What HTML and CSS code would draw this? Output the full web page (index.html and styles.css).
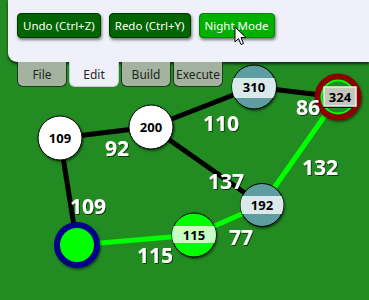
FILE: index.html
```html
<!DOCTYPE html>
<html>
<head>
<meta charset="utf-8">
<link rel="stylesheet" href="styles.css">
</head>
<body>
<svg class="graph" width="369" height="300" viewBox="0 0 369 300">
  <defs>
    <filter id="sh" x="-30%" y="-30%" width="160%" height="160%">
      <feDropShadow dx="1" dy="1.5" stdDeviation="1.2" flood-color="#000" flood-opacity="0.55"/>
    </filter>
    <filter id="tsh" x="-30%" y="-30%" width="160%" height="160%">
      <feDropShadow dx="1" dy="1" stdDeviation="0.6" flood-color="#000" flood-opacity="0.6"/>
    </filter>
    <clipPath id="c310"><circle cx="254" cy="87" r="22"/></clipPath>
    <clipPath id="c192"><circle cx="262" cy="205" r="21.5"/></clipPath>
    <clipPath id="c115"><circle cx="194" cy="235" r="22"/></clipPath>
  </defs>
  <g class="edges-black">
    <line x1="60" y1="138" x2="151" y2="127"/>
    <line x1="151" y1="127" x2="254" y2="87"/>
    <line x1="254" y1="87" x2="338" y2="97"/>
    <line x1="151" y1="127" x2="262" y2="205"/>
    <line x1="60" y1="138" x2="77" y2="245"/>
  </g>
  <g class="edges-lime">
    <line x1="77" y1="245" x2="194" y2="235"/>
    <line x1="194" y1="235" x2="262" y2="205"/>
    <line x1="262" y1="205" x2="338" y2="97"/>
  </g>
  <g filter="url(#sh)">
    <circle cx="60" cy="138" r="22" fill="#fff" stroke="#000" stroke-width="1"/>
    <circle cx="151" cy="127" r="22" fill="#fff" stroke="#000" stroke-width="1"/>
    <circle cx="254" cy="87" r="22" fill="#5f9ea0" stroke="#000" stroke-width="1"/>
    <circle cx="262" cy="205" r="21.5" fill="#5f9ea0" stroke="#000" stroke-width="1"/>
    <circle cx="194" cy="235" r="22" fill="#00ff00" stroke="#000" stroke-width="1"/>
    <circle cx="77" cy="245" r="20" fill="#00ff00" stroke="#00008b" stroke-width="6"/>
    <circle cx="338" cy="97" r="20.5" fill="#00ff00" stroke="#8b0000" stroke-width="6"/>
  </g>
  <rect x="230" y="78" width="48" height="20" fill="#dae9ea" clip-path="url(#c310)"/>
  <rect x="238" y="196" width="48" height="18" fill="#dae9ea" clip-path="url(#c192)"/>
  <rect x="170" y="226" width="48" height="17" fill="#c6ffc6" clip-path="url(#c115)"/>
  <circle cx="338" cy="97" r="15.5" fill="#228b22"/>
  <rect x="323" y="100" width="30" height="8" fill="#111"/>
  <rect x="324" y="87" width="32" height="19" fill="#c6c6be" stroke="#e6f6e0" stroke-width="1.5"/>
  <g class="ntext">
    <text x="60" y="143">109</text>
    <text x="151" y="132">200</text>
    <text x="254" y="92">310</text>
    <text x="262" y="210">192</text>
    <text x="194" y="240">115</text>
    <text x="340" y="102">324</text>
  </g>
  <g class="etext" filter="url(#tsh)">
    <text x="117" y="156">92</text>
    <text x="221" y="131">110</text>
    <text x="308" y="115">86</text>
    <text x="320" y="175">132</text>
    <text x="226" y="189">137</text>
    <text x="88" y="214">109</text>
    <text x="155" y="263">115</text>
    <text x="241" y="245">77</text>
  </g>
</svg>

<div class="panel">
  <div class="toolbar">
    <button class="btn">Undo (Ctrl+Z)</button>
    <button class="btn">Redo (Ctrl+Y)</button>
    <button class="btn btn-active">Night Mode</button>
  </div>
</div>
<div class="tabs">
  <div class="tab">File</div>
  <div class="tab tab-selected">Edit</div>
  <div class="tab">Build</div>
  <div class="tab">Execute</div>
</div>

<svg class="cursor" width="14" height="21" viewBox="0 0 14 21">
  <path d="M1 1 L1 16 L4.5 12.5 L7 18.5 L9.5 17.5 L7 11.5 L12 11.5 Z" fill="#fff" stroke="#000" stroke-width="1" stroke-linejoin="round"/>
</svg>
</body>
</html>
```

FILE: styles.css
```css
html, body {
  margin: 0;
  padding: 0;
}
body {
  width: 369px;
  height: 300px;
  overflow: hidden;
  background: #228b22;
  position: relative;
  font-family: "Noto Sans", "Open Sans", sans-serif;
}
.graph {
  position: absolute;
  left: 0;
  top: 0;
}
.edges-black line {
  stroke: #000;
  stroke-width: 5;
}
.edges-lime line {
  stroke: #00ff00;
  stroke-width: 5;
}
.ntext text {
  font-family: "Noto Sans", sans-serif;
  font-weight: bold;
  font-size: 13px;
  text-anchor: middle;
  fill: #000;
}
.etext text {
  font-family: "Noto Sans", sans-serif;
  font-weight: bold;
  font-size: 21px;
  text-anchor: middle;
  fill: #fff;
}
.panel {
  position: relative;
  margin-left: 8px;
  height: 62px;
  background: #f0f0fa;
  border-bottom-left-radius: 9px;
  box-shadow: 0 2px 3px rgba(0, 0, 0, 0.7);
  box-sizing: border-box;
  padding: 13px 0 0 9px;
}
.toolbar {
  display: flex;
  gap: 8px;
}
.btn {
  height: 25px;
  padding: 0 5px;
  border: 1px solid #003800;
  border-radius: 4px;
  background: #006400;
  color: #fff;
  font-family: "Noto Sans", sans-serif;
  font-size: 11.5px;
  box-shadow: 1px 2px 3px rgba(0, 0, 0, 0.5);
  white-space: nowrap;
}
.btn-active {
  background: #00b000;
  border-color: #008800;
}
.tabs {
  position: relative;
  display: flex;
  gap: 2px;
  margin-left: 17px;
}
.tab {
  width: 50px;
  height: 25px;
  box-sizing: border-box;
  background: #a3b3a0;
  border: 1px solid #1a3a1a;
  border-top: none;
  border-radius: 0 0 6px 6px;
  display: flex;
  align-items: center;
  justify-content: center;
  font-size: 12px;
  color: #1e261e;
}
.tab-selected {
  background: #f0f0fa;
  border-color: #c8c8d0;
}
.cursor {
  position: absolute;
  left: 234px;
  top: 26px;
}
```
